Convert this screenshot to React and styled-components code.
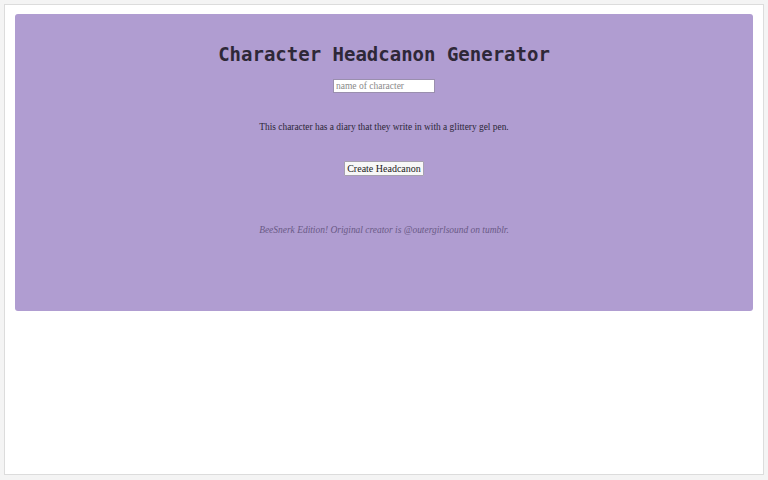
import React, { useState } from "react";
import styled, { createGlobalStyle } from "styled-components";

const headcanons = [
  "has a diary that they write in with a glittery gel pen.",
  "secretly collects rubber ducks.",
  "hums show tunes when they think nobody is listening.",
  "always orders the same thing at every restaurant.",
];

const App = () => {
  const [name, setName] = useState("");
  const [canon, setCanon] = useState(headcanons[0]);

  const handleCreate = () => {
    const next = headcanons[Math.floor(Math.random() * headcanons.length)];
    setCanon(next);
  };

  return (
    <>
      <GlobalStyle />
      <Frame>
        <Panel>
          <Title>Character Headcanon Generator</Title>
          <NameInput
            placeholder="name of character"
            value={name}
            onChange={(e) => setName(e.target.value)}
          />
          <Result>
            {name || "This character"} {canon}
          </Result>
          <CreateButton onClick={handleCreate}>Create Headcanon</CreateButton>
          <Credit>
            BeeSnerk Edition! Original creator is @outergirlsound on tumblr.
          </Credit>
        </Panel>
      </Frame>
    </>
  );
};

export default App;

const GlobalStyle = createGlobalStyle`
  html, body {
    margin: 0;
    background: #f4f4f4;
  }
  body {
    padding: 4px;
    font-family: "Liberation Serif", serif;
  }
`;

const Frame = styled.div`
  box-sizing: border-box;
  height: 471px;
  width: 760px;
  background: #fff;
  border: 1px solid #dcdcdc;
  padding: 9px 10px;
`;

const Panel = styled.div`
  box-sizing: border-box;
  height: 297px;
  background: #b09dd1;
  border-radius: 3px;
  display: flex;
  flex-direction: column;
  align-items: center;
  padding-top: 29px;
`;

const Title = styled.h1`
  margin: 0;
  font-family: "DejaVu Sans Mono", monospace;
  font-size: 19px;
  line-height: 22px;
  font-weight: bold;
  color: #2e2838;
`;

const NameInput = styled.input`
  box-sizing: border-box;
  margin-top: 14px;
  width: 102px;
  height: 14px;
  padding: 0 2px;
  border: 1px solid #9a8fae;
  background: #fff;
  font-family: "Liberation Serif", serif;
  font-size: 9.5px;
  color: #333;
  outline: none;

  &::placeholder {
    color: #8a8a8a;
  }
`;

const Result = styled.p`
  margin: 28px 0 0;
  font-size: 9.4px;
  line-height: 12px;
  color: #2c2638;
`;

const CreateButton = styled.button`
  box-sizing: border-box;
  margin-top: 28px;
  width: 80px;
  height: 15px;
  padding: 0;
  border: 1px solid #a6a0b0;
  border-radius: 1px;
  background: #f7f7f7;
  font-family: "Liberation Serif", serif;
  font-size: 10px;
  line-height: 12px;
  color: #222;
  cursor: pointer;
`;

const Credit = styled.p`
  margin: 48px 0 0;
  font-size: 9.45px;
  line-height: 12px;
  font-style: italic;
  color: #6a5a86;
`;
